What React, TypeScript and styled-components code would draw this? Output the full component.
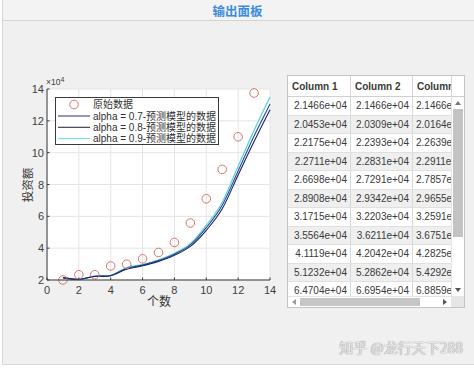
import styled, { createGlobalStyle } from "styled-components";

const GlobalStyle = createGlobalStyle`
  html, body {
    margin: 0;
    padding: 0;
    background: #ffffff;
  }
  body {
    font-family: "Liberation Sans", "Noto Sans CJK SC", sans-serif;
  }
`;

// plot mapping (page coordinates, 1e4 units on y)
const X0 = 47;
const X1 = 270;
const Y_TOP = 89;
const Y_BOT = 280;
const px = (x: number) => X0 + (x * (X1 - X0)) / 14;
const py = (y: number) => Y_BOT - ((y - 2) * (Y_BOT - Y_TOP)) / 12;

const raw = [2.0, 2.33, 2.33, 2.88, 2.99, 3.33, 3.73, 4.36, 5.58, 7.1, 8.95, 11.0, 13.75];

const a07 = [2.1466, 2.0453, 2.2175, 2.2711, 2.6698, 2.8908, 3.1715, 3.5564, 4.1119, 5.1232, 6.4704, 8.6, 10.7, 12.7];
const a08 = [2.1466, 2.0309, 2.2393, 2.2831, 2.7291, 2.9342, 3.2203, 3.6211, 4.2042, 5.2862, 6.6954, 8.85, 11.05, 13.05];
const a09 = [2.1466, 2.0164, 2.2639, 2.2911, 2.7857, 2.9655, 3.2591, 3.6751, 4.2825, 5.4292, 6.8859, 9.15, 11.4, 13.5];

const rows = [
  ["2.1466e+04", "2.1466e+04", "2.1466e+04"],
  ["2.0453e+04", "2.0309e+04", "2.0164e+04"],
  ["2.2175e+04", "2.2393e+04", "2.2639e+04"],
  ["2.2711e+04", "2.2831e+04", "2.2911e+04"],
  ["2.6698e+04", "2.7291e+04", "2.7857e+04"],
  ["2.8908e+04", "2.9342e+04", "2.9655e+04"],
  ["3.1715e+04", "3.2203e+04", "3.2591e+04"],
  ["3.5564e+04", "3.6211e+04", "3.6751e+04"],
  ["4.1119e+04", "4.2042e+04", "4.2825e+04"],
  ["5.1232e+04", "5.2862e+04", "5.4292e+04"],
  ["6.4704e+04", "6.6954e+04", "6.8859e+04"],
];

const smoothPath = (vals: number[]) => {
  const pts = vals.map((v, i) => [px(i + 1), py(v)]);
  let d = `M${pts[0][0]},${pts[0][1]}`;
  for (let i = 0; i < pts.length - 1; i++) {
    const p0 = pts[i - 1] || pts[i];
    const p1 = pts[i];
    const p2 = pts[i + 1];
    const p3 = pts[i + 2] || p2;
    const c1x = p1[0] + (p2[0] - p0[0]) / 6;
    const c1y = p1[1] + (p2[1] - p0[1]) / 6;
    const c2x = p2[0] - (p3[0] - p1[0]) / 6;
    const c2y = p2[1] - (p3[1] - p1[1]) / 6;
    d += ` C${c1x},${c1y} ${c2x},${c2y} ${p2[0]},${p2[1]}`;
  }
  return d;
};

const Chart = () => {
  const xt = [0, 2, 4, 6, 8, 10, 12, 14];
  const yt = [2, 4, 6, 8, 10, 12, 14];
  const legend = [
    { label: "alpha = 0.7-预测模型的数据", color: "#3b4a7e" },
    { label: "alpha = 0.8-预测模型的数据", color: "#2a3140" },
    { label: "alpha = 0.9-预测模型的数据", color: "#6fe0e0" },
  ];

  return (
    <svg width={280} height={245} viewBox="3 70 280 245">
      <rect x={X0} y={Y_TOP} width={X1 - X0} height={Y_BOT - Y_TOP} fill="#ffffff" />
      {xt.map((t) => (
        <line key={"gx" + t} x1={px(t)} x2={px(t)} y1={Y_TOP} y2={Y_BOT} stroke="#e4e4e4" strokeWidth={1} />
      ))}
      {yt.map((t) => (
        <line key={"gy" + t} x1={X0} x2={X1} y1={py(t)} y2={py(t)} stroke="#e4e4e4" strokeWidth={1} />
      ))}

      <path d={smoothPath(a09)} fill="none" stroke="#5fd6dc" strokeWidth={1.3} />
      <path d={smoothPath(a08)} fill="none" stroke="#2b4a8a" strokeWidth={1.1} />
      <path d={smoothPath(a07)} fill="none" stroke="#1a2470" strokeWidth={1.1} />

      {raw.map((v, i) => (
        <circle key={"c" + i} cx={px(i + 1)} cy={py(v)} r={4.3} fill="none" stroke="#d2786c" strokeWidth={1} />
      ))}

      <line x1={X0} x2={X0} y1={Y_TOP} y2={Y_BOT} stroke="#3a3a3a" strokeWidth={1} />
      <line x1={X0} x2={X1} y1={Y_BOT} y2={Y_BOT} stroke="#3a3a3a" strokeWidth={1} />
      {xt.map((t) => (
        <line key={"tx" + t} x1={px(t)} x2={px(t)} y1={Y_BOT} y2={Y_BOT - 2.5} stroke="#3a3a3a" strokeWidth={1} />
      ))}
      {yt.map((t) => (
        <line key={"ty" + t} x1={X0} x2={X0 + 2.5} y1={py(t)} y2={py(t)} stroke="#3a3a3a" strokeWidth={1} />
      ))}

      {xt.map((t) => (
        <text key={"lx" + t} x={px(t)} y={294} fontSize={11} fill="#404040" textAnchor="middle" fontFamily="Liberation Sans, sans-serif">
          {t}
        </text>
      ))}
      {yt.map((t) => (
        <text key={"ly" + t} x={44} y={py(t) + 4} fontSize={11} fill="#404040" textAnchor="end" fontFamily="Liberation Sans, sans-serif">
          {t}
        </text>
      ))}
      <text x={46} y={85} fontSize={8.5} fill="#404040" fontFamily="Liberation Sans, sans-serif">
        ×10
        <tspan fontSize={7} dy={-3}>4</tspan>
      </text>

      <text x={159} y={306} fontSize={12} fill="#333" textAnchor="middle" fontFamily="Noto Sans CJK SC, sans-serif">
        个数
      </text>
      <text
        x={0}
        y={0}
        fontSize={11.5}
        fill="#333"
        textAnchor="middle"
        fontFamily="Noto Sans CJK SC, sans-serif"
        transform="translate(32 185) rotate(-90)"
      >
        投资额
      </text>

      <rect x={55.5} y={97.5} width={163} height={47} fill="#ffffff" stroke="#3a3a3a" strokeWidth={1} />
      <circle cx={74} cy={104.5} r={4.3} fill="none" stroke="#d2786c" strokeWidth={1} />
      <text x={93} y={108} fontSize={10} fill="#303030" fontFamily="Liberation Sans, Noto Sans CJK SC, sans-serif">
        原始数据
      </text>
      {legend.map((l, i) => (
        <g key={l.label}>
          <line x1={58} x2={90} y1={116 + i * 11.3} y2={116 + i * 11.3} stroke={l.color} strokeWidth={1.1} />
          <text x={93} y={119.5 + i * 11.3} fontSize={10} fill="#303030" fontFamily="Liberation Sans, Noto Sans CJK SC, sans-serif">
            {l.label}
          </text>
        </g>
      ))}
    </svg>
  );
};

const App = () => {
  return (
    <>
      <GlobalStyle />
      <Page>
        <Panel>
          <TitleBar>输出面板</TitleBar>
          <Body>
            <ChartArea>
              <Chart />
            </ChartArea>
            <TableColumn>
              <TableFrame>
                <HeaderRow>
                  <HeaderCell>Column 1</HeaderCell>
                  <HeaderCell>Column 2</HeaderCell>
                  <HeaderCell>Column 3</HeaderCell>
                </HeaderRow>
                <HeaderCorner />
                <BodyRows>
                  {rows.map((r, i) => (
                    <DataRow key={i} $striped={i % 2 === 1}>
                      {r.map((c, j) => (
                        <DataCell key={j}>{c}</DataCell>
                      ))}
                    </DataRow>
                  ))}
                </BodyRows>
                <VScroll>
                  <ArrowBox>
                    <Tri $dir="up" />
                  </ArrowBox>
                  <VThumb />
                  <VTrack />
                  <ArrowBox>
                    <Tri $dir="down" />
                  </ArrowBox>
                </VScroll>
                <HScroll>
                  <ArrowBox>
                    <Tri $dir="left" />
                  </ArrowBox>
                  <HThumb />
                  <HTrack />
                  <ArrowBox>
                    <Tri $dir="right" />
                  </ArrowBox>
                </HScroll>
                <Corner />
              </TableFrame>
              <Watermark>知乎 @龙行天下288</Watermark>
            </TableColumn>
          </Body>
        </Panel>
      </Page>
    </>
  );
};

const Page = styled.div`
  width: 474px;
  height: 369px;
  overflow: hidden;
  background: #ffffff;
`;

const Panel = styled.div`
  margin-left: 2px;
  width: 472px;
  height: 365px;
  box-sizing: border-box;
  border-left: 1px solid #d9d9d9;
  border-bottom: 1px solid #d9d9d9;
  background: #f0f0f0;
`;

const TitleBar = styled.div`
  height: 20px;
  border-bottom: 1px solid #d4d4d4;
  background: #f3f3f3;
  display: flex;
  align-items: center;
  justify-content: center;
  padding-right: 2px;
  font-family: "Noto Sans CJK SC", sans-serif;
  font-size: 12.5px;
  font-weight: bold;
  color: #3a8ddb;
`;

const Body = styled.div`
  display: flex;
`;

const ChartArea = styled.div`
  width: 280px;
  padding-top: 49px;
  display: flex;

  svg {
    display: block;
  }
`;

const TableColumn = styled.div`
  padding-top: 54px;
  padding-left: 4px;
  width: 178px;
  display: flex;
  flex-direction: column;
`;

const TableFrame = styled.div`
  width: 178px;
  height: 233px;
  box-sizing: border-box;
  border: 1px solid #c4c4c4;
  background: #ffffff;
  display: grid;
  grid-template-columns: 163px 13px;
  grid-template-rows: 21px 199px 11px;
  overflow: hidden;
  font-family: "Liberation Sans", sans-serif;
`;

const HeaderRow = styled.div`
  display: flex;
  border-bottom: 1px solid #d0d0d0;
  background: #ffffff;
  overflow: hidden;
`;

const HeaderCell = styled.div`
  flex: 0 0 62px;
  box-sizing: border-box;
  padding-left: 4px;
  border-right: 1px solid #d6d6d6;
  display: flex;
  align-items: center;
  overflow: hidden;
  font-size: 10px;
  font-weight: bold;
  color: #3a3a3a;
  white-space: nowrap;

  &:first-child {
    flex-basis: 63px;
  }
  &:last-child {
    flex-basis: 38px;
    border-right: none;
  }
`;

const HeaderCorner = styled.div`
  border-bottom: 1px solid #d0d0d0;
  border-left: 1px solid #d6d6d6;
  background: #ffffff;
`;

const BodyRows = styled.div`
  overflow: hidden;
`;

const DataRow = styled.div<{ $striped: boolean }>`
  display: flex;
  height: 18.5px;
  box-sizing: border-box;
  border-bottom: 1px solid #e0e0e0;
  background: ${(p) => (p.$striped ? "#efefef" : "#ffffff")};
`;

const DataCell = styled.div`
  flex: 0 0 62px;
  box-sizing: border-box;
  padding-right: 3px;
  border-right: 1px solid #d8d8d8;
  display: flex;
  align-items: center;
  justify-content: flex-end;
  overflow: hidden;
  font-size: 10px;
  color: #3a3a3a;
  white-space: nowrap;

  &:first-child {
    flex-basis: 63px;
  }
  &:last-child {
    flex-basis: 38px;
    justify-content: flex-start;
    padding-left: 3px;
    padding-right: 0;
    border-right: none;
  }
`;

const VScroll = styled.div`
  display: flex;
  flex-direction: column;
  background: #ffffff;
  border-left: 1px solid #e4e4e4;
`;

const ArrowBox = styled.div`
  flex: 0 0 12px;
  display: flex;
  align-items: center;
  justify-content: center;
`;

const Tri = styled.div<{ $dir: "up" | "down" | "left" | "right" }>`
  width: 0;
  height: 0;
  border-style: solid;
  border-color: transparent;
  ${(p) =>
    p.$dir === "up"
      ? "border-width: 0 3px 4px 3px; border-bottom-color: #777;"
      : p.$dir === "down"
      ? "border-width: 4px 3px 0 3px; border-top-color: #555;"
      : p.$dir === "left"
      ? "border-width: 3px 4px 3px 0; border-right-color: #999;"
      : "border-width: 3px 0 3px 4px; border-left-color: #555;"}
`;

const VThumb = styled.div`
  flex: 0 0 128px;
  margin: 0 1px;
  background: #c3c3c3;
`;

const VTrack = styled.div`
  flex: 1;
`;

const HScroll = styled.div`
  display: flex;
  background: #ffffff;
  border-top: 1px solid #e4e4e4;
`;

const HThumb = styled.div`
  flex: 0 0 120px;
  margin: 1px 0;
  background: #c6c6c6;
`;

const HTrack = styled.div`
  flex: 1;
`;

const Corner = styled.div`
  background: #e6e6e6;
`;

const Watermark = styled.div`
  margin-top: 31px;
  padding-right: 2px;
  text-align: right;
  font-family: "Noto Sans CJK SC", sans-serif;
  font-size: 14px;
  line-height: 16px;
  color: #e6e6e6;
  text-shadow: 0 0 1px #9a9a9a, 0 0 1px #9a9a9a;
  white-space: nowrap;
`;

export default App;
